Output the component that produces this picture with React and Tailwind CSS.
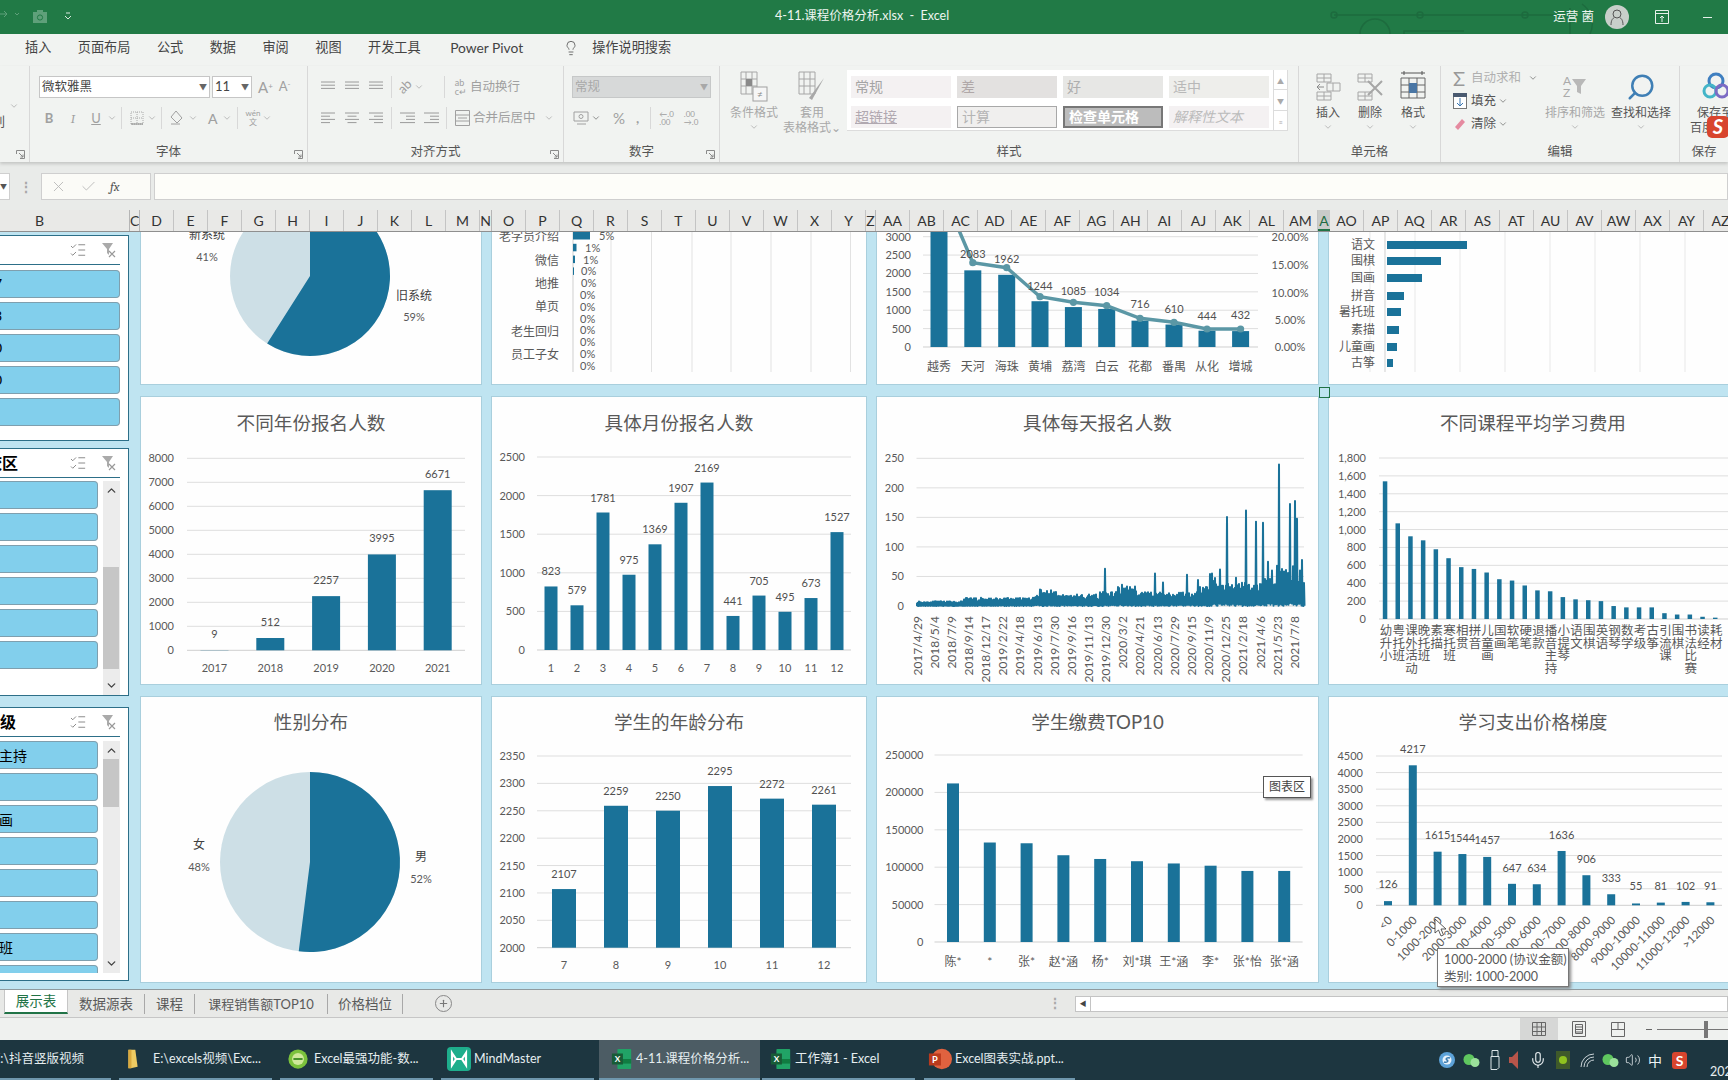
import React from "react";
import { ChevronDown, ChevronUp, X, Check, Lightbulb, Search, Mic, Volume2, ListChecks, Plus } from "lucide-react";

const BLUE = "#1a7299";
const LIGHT = "#cddfe6";
const COL = [141, 492, 877, 1329];
const COLW = [340, 374, 441, 408];
const ROW = [232, 397, 697];
const ROWH = [152, 287, 285];

const polar = (cx, cy, r, frac) => {
  const a = frac * 2 * Math.PI;
  return [cx + r * Math.sin(a), cy - r * Math.cos(a)];
};

// pie starting at 12 o'clock, dark slice clockwise
const Pie = ({ cx, cy, r, share }) => {
  const [x, y] = polar(cx, cy, r, share);
  return (
    <g>
      <circle cx={cx} cy={cy} r={r} fill={LIGHT} />
      <path d={`M${cx} ${cy}L${cx} ${cy - r}A${r} ${r} 0 ${share > 0.5 ? 1 : 0} 1 ${x} ${y}Z`} fill={BLUE} />
    </g>
  );
};

const Card = ({ col, row, title, children }) => {
  const top = !title ? 0 : row === 1 ? 55 : 52;
  const h = ROWH[row] - top;
  return (
    <div className="bg-[#fefefe] shadow-[0_0_0_1px_#a9cfdd] flex flex-col">
      {title && (
        <div className={`shrink-0 flex items-center justify-center text-[18.6px] text-[#595959] ${row === 1 ? "h-[55px]" : "h-[52px]"}`}>{title}</div>
      )}
      <svg className="block shrink-0 overflow-visible" width={COLW[col]} height={h} viewBox={`${COL[col]} ${ROW[row] + top} ${COLW[col]} ${h}`}>
        {children}
      </svg>
    </div>
  );
};

// value axis and gridlines shared by the column charts
const Axis = ({ x1, x2, top, base, labels, lx, fs = 11 }) => {
  const step = (base - top) / (labels.length - 1);
  return (
    <g>
      {labels.map((t, i) => {
        const y = top + step * i;
        return (
          <g key={t}>
            <line x1={x1} x2={x2} y1={y} y2={y} stroke={i === labels.length - 1 ? "#cfcfcf" : "#dedede"} />
            <text x={lx} y={y + 4} textAnchor="end" fontSize={fs} fill="#595959">{t}</text>
          </g>
        );
      })}
    </g>
  );
};

const Columns = ({ data, cx0, dx, w, base, scale, min = 0, fill = BLUE }) =>
  data.map((v, i) => (
    <rect key={i} x={cx0 + dx * i - w / 2} y={base - (v - min) * scale} width={w} height={(v - min) * scale} fill={fill} />
  ));

const Vals = ({ data, cx0, dx, base, scale, min = 0, gap = 12, fs = 11 }) =>
  data.map((v, i) => (
    <text key={i} x={cx0 + dx * i} y={base - (v - min) * scale - gap} textAnchor="middle" fontSize={fs} fill="#505050">{v}</text>
  ));

const Cats = ({ data, cx0, dx, y, fs = 11 }) =>
  data.map((c, i) => (
    <text key={i} x={cx0 + dx * i} y={y} textAnchor="middle" fontSize={fs} fill="#595959">{c}</text>
  ));

/* --------- daily sign-ups: noisy band with the big spikes of the picture --------- */
const SPIKES = [[430, 63], [460, 36], [520, 55], [535, 40], [580, 53], [600, 44], [625, 55], [640, 62], [653, 151], [668, 48], [687, 162], [705, 143], [718, 141], [728, 75], [735, 60], [748, 240], [768, 173], [777, 178], [780, 148], [789, 78], [785, 60]];
const dailyPath = () => {
  let seed = 11;
  const rnd = () => {
    seed = (seed * 16807) % 2147483647;
    return seed / 2147483647;
  };
  const env = (z) => (z < 170 ? 8 : z < 300 ? 14 : z < 420 ? 20 : z < 620 ? 24 : z < 720 ? 40 : 52);
  const spikeAt = {};
  SPIKES.forEach(([z, v]) => {
    spikeAt[Math.round(870 + z / 1.827)] = v;
  });
  let d = "M917 606";
  for (let x = 917; x <= 1304; x++) {
    const z = (x - 870) * 1.827;
    const bump = z > 300 && Math.sin(z / 23) > 0.75 ? 1.4 : 1;
    const hi = spikeAt[x] ?? env(z) * bump * (0.55 + 0.45 * rnd());
    const lo = env(z) * 0.12 * rnd();
    d += `L${x} ${606 - hi * 0.59}L${x + 0.5} ${606 - lo * 0.59}`;
  }
  return d;
};
const DAILY_D = dailyPath();
const DAILY_LABELS = ["2017/4/29", "2018/5/4", "2018/7/9", "2018/9/14", "2018/12/17", "2019/2/22", "2019/4/18", "2019/6/13", "2019/7/30", "2019/9/16", "2019/11/13", "2019/12/30", "2020/3/2", "2020/4/21", "2020/6/13", "2020/7/29", "2020/9/15", "2020/11/9", "2020/12/25", "2021/2/18", "2021/4/6", "2021/5/23", "2021/7/8"];

const COURSE = [[1540, "幼升小"], [1070, "粤托班"], [925, "课外活动"], [880, "晚托班"], [780, "素描"], [680, "寒托班"], [580, "相贯"], [560, "拼音"], [520, "儿童画"], [445, "国画"], [430, "软笔"], [375, "硬笔"], [320, "退款"], [310, "播音主持"], [245, "小提琴"], [220, "语文"], [210, "围棋"], [200, "英语"], [145, "钢琴"], [130, "数学"], [130, "考级"], [130, "古筝"], [65, "引流课"], [50, "围棋"], [50, "书法比赛"], [25, "读经"], [15, "耗材"]];

const PRICE = [[126, 884, "<0"], [4217, 749, "0-1000"], [1615, 835, "1000-2000"], [1544, 838, "2000-3000"], [1457, 840, "3000-4000"], [647, 868, "4000-5000"], [634, 868, "5000-6000"], [1636, 835, "6000-7000"], [906, 859, "7000-8000"], [333, 878, "8000-9000"], [55, 886, "9000-10000"], [81, 886, "10000-11000"], [102, 886, "11000-12000"], [91, 886, ">12000"]];

const AREA = [[939, null, "越秀", 0, 0], [972.8, 2083, "天河", 254, 262.7], [1006.7, 1962, "海珠", 259, 267.7], [1040, 1244, "黄埔", 285.7, 296.7], [1073.4, 1085, "荔湾", 290.7, 302.3], [1106.7, 1034, "白云", 292, 305.7], [1140, 716, "花都", 304, 318.3], [1174, 610, "番禺", 309, 322.3], [1207, 444, "从化", 315.7, 329], [1240.6, 432, "增城", 315, 329]];

const SOURCE = [["老字员介绍", 237], ["微信", 261], ["地推", 284], ["单页", 307], ["老生回归", 332], ["员工子女", 355]];
const PCT = [["5%", 17, 599], ["1%", 3.5, 585], ["1%", 2, 583], ["0%", 1, 581], ["0%", 0, 581], ["0%", 0, 580], ["0%", 0, 580], ["0%", 0, 580], ["0%", 0, 580], ["0%", 0, 580], ["0%", 0, 580], ["0%", 0, 580]];

/* --------- chart cards --------- */
const Charts = () => (
  <div className="grid grid-cols-[340px_374px_441px_408px] grid-rows-[152px_287px_285px] gap-x-[11px] gap-y-[13px]">
    <Card col={0} row={0}>
      <Pie cx={310} cy={276} r={80} share={0.59} />
      <text x={207} y={239} textAnchor="middle" fontSize={12} fill="#404040">新系统</text>
      <text x={207} y={261} textAnchor="middle" fontSize={11} fill="#595959">41%</text>
      <text x={414} y={300} textAnchor="middle" fontSize={12} fill="#404040">旧系统</text>
      <text x={414} y={321} textAnchor="middle" fontSize={11} fill="#595959">59%</text>
    </Card>

    <Card col={1} row={0}>
      {[611, 651.5, 692, 731, 771, 811, 850.5].map((x) => (
        <line key={x} x1={x} x2={x} y1={232} y2={372} stroke="#e2e2e2" />
      ))}
      <line x1={573} x2={573} y1={232} y2={372} stroke="#cfcfcf" />
      {SOURCE.map(([t, y]) => (
        <text key={t} x={559} y={y + 4} textAnchor="end" fontSize={12} fill="#595959">{t}</text>
      ))}
      {PCT.map(([t, w, x], i) => (
        <g key={i}>
          {w > 0 && <rect x={573} y={232 + 11.8 * i} width={w} height={7.5} fill={BLUE} />}
          <text x={x} y={240 + 11.8 * i} fontSize={11} fill="#595959">{t}</text>
        </g>
      ))}
    </Card>

    <Card col={2} row={0}>
      <Axis x1={923} x2={1258} top={236.7} base={347} labels={["3000", "2500", "2000", "1500", "1000", "500", "0"]} lx={911} />
      {AREA.map(([x, v], i) => (
        <rect key={i} x={x - 8.5} y={v ? 347 - v * 0.0368 : 228} width={17} height={v ? v * 0.0368 : 119} fill={BLUE} />
      ))}
      <polyline points={`958,228 ${AREA.slice(1).map((a) => `${a[0]},${a[4]}`).join(" ")}`} fill="none" stroke="#5b97a5" strokeWidth={3.5} />
      {AREA.slice(1).map((a) => (
        <g key={a[2]}>
          <circle cx={a[0]} cy={a[4]} r={3.6} fill="#5b97a5" />
          <text x={a[0]} y={a[3] + 4} textAnchor="middle" fontSize={11} fill="#505050">{a[1]}</text>
        </g>
      ))}
      {AREA.map((a) => (
        <text key={a[2]} x={a[0]} y={371} textAnchor="middle" fontSize={12} fill="#595959">{a[2]}</text>
      ))}
      {[["20.00%", 237], ["15.00%", 265], ["10.00%", 292.5], ["5.00%", 320], ["0.00%", 347]].map(([t, y]) => (
        <text key={t} x={1290} y={y + 4} textAnchor="middle" fontSize={11} fill="#595959">{t}</text>
      ))}
    </Card>

    <Card col={3} row={0}>
      {[1370, 1415, 1460, 1505, 1550, 1595, 1640, 1685].map((x) => (
        <line key={x} x1={x} x2={x} y1={232} y2={372} stroke="#e8e8e8" />
      ))}
      <line x1={1385} x2={1385} y1={232} y2={372} stroke="#cfcfcf" />
      {[["语文", 245, 80], ["围棋", 261, 54], ["国画", 278, 35], ["拼音", 296, 17], ["暑托班", 312, 14], ["素描", 330, 12], ["儿童画", 347, 10], ["古筝", 363, 6]].map(([t, y, w]) => (
        <g key={y}>
          <text x={1375} y={y + 4} textAnchor="end" fontSize={12} fill="#595959">{t}</text>
          <rect x={1387} y={y - 4} width={w} height={8} fill={BLUE} />
        </g>
      ))}
    </Card>

    <Card col={0} row={1} title="不同年份报名人数">
      <Axis x1={187} x2={465} top={458.3} base={650.3} labels={["8000", "7000", "6000", "5000", "4000", "3000", "2000", "1000", "0"]} lx={174} />
      <Columns data={[9, 512, 2257, 3995, 6671]} cx0={214.5} dx={55.8} w={28} base={650.3} scale={0.024} />
      <Vals data={[9, 512, 2257, 3995, 6671]} cx0={214.5} dx={55.8} base={650.3} scale={0.024} gap={12} />
      <Cats data={[2017, 2018, 2019, 2020, 2021]} cx0={214.5} dx={55.8} y={672} />
    </Card>

    <Card col={1} row={1} title="具体月份报名人数">
      <Axis x1={537} x2={851} top={457} base={650} labels={["2500", "2000", "1500", "1000", "500", "0"]} lx={525} />
      <Columns data={[823, 579, 1781, 975, 1369, 1907, 2169, 441, 705, 495, 673, 1527]} cx0={551} dx={26} w={13} base={650} scale={0.0772} />
      <Vals data={[823, 579, 1781, 975, 1369, 1907, 2169, 441, 705, 495, 673, 1527]} cx0={551} dx={26} base={650} scale={0.0772} gap={11} />
      <Cats data={[1, 2, 3, 4, 5, 6, 7, 8, 9, 10, 11, 12]} cx0={551} dx={26} y={672} />
    </Card>

    <Card col={2} row={1} title="具体每天报名人数">
      <Axis x1={916.5} x2={1304} top={458.3} base={606} labels={["250", "200", "150", "100", "50", "0"]} lx={904} />
      <path d={DAILY_D} fill="none" stroke={BLUE} strokeWidth={2} strokeLinejoin="round" />
      {DAILY_LABELS.map((t, i) => (
        <text key={t} transform={`translate(${921.5 + i * 17.15} 616) rotate(-90)`} textAnchor="end" fontSize={12} fill="#595959">{t}</text>
      ))}
    </Card>

    <Card col={3} row={1} title="不同课程平均学习费用">
      <Axis x1={1379} x2={1728} top={458} base={619} labels={["1,800", "1,600", "1,400", "1,200", "1,000", "800", "600", "400", "200", "0"]} lx={1366} />
      {COURSE.map(([v, t], i) => (
        <g key={i}>
          <rect x={1382.8 + 12.7 * i} y={619 - v * 0.0894} width={4.5} height={v * 0.0894} fill={BLUE} />
          <text x={1385 + 12.7 * i} y={624} fontSize={12.5} fill="#595959" className="[writing-mode:vertical-rl]">{t}</text>
        </g>
      ))}
    </Card>

    <Card col={0} row={2} title="性别分布">
      <Pie cx={310} cy={862} r={90} share={0.52} />
      <text x={199} y={849} textAnchor="middle" fontSize={12} fill="#404040">女</text>
      <text x={199} y={871} textAnchor="middle" fontSize={11} fill="#595959">48%</text>
      <text x={421} y={861} textAnchor="middle" fontSize={12} fill="#404040">男</text>
      <text x={421} y={883} textAnchor="middle" fontSize={11} fill="#595959">52%</text>
    </Card>

    <Card col={1} row={2} title="学生的年龄分布">
      <Axis x1={537} x2={851} top={756} base={947.7} labels={["2350", "2300", "2250", "2200", "2150", "2100", "2050", "2000"]} lx={525} />
      <Columns data={[2107, 2259, 2250, 2295, 2272, 2261]} cx0={564} dx={52} w={24} base={947.7} scale={0.548} min={2000} />
      <Vals data={[2107, 2259, 2250, 2295, 2272, 2261]} cx0={564} dx={52} base={947.7} scale={0.548} min={2000} gap={11} />
      <Cats data={[7, 8, 9, 10, 11, 12]} cx0={564} dx={52} y={969} />
    </Card>

    <Card col={2} row={2} title="学生缴费TOP10">
      <Axis x1={934.5} x2={1302.6} top={755} base={942} labels={["250000", "200000", "150000", "100000", "50000", "0"]} lx={923.5} />
      <Columns data={[212000, 133000, 132000, 116000, 111000, 108000, 105000, 102000, 95000, 95000]} cx0={953} dx={36.8} w={12} base={942} scale={0.000748} />
      <Cats data={["陈*", "*", "张*", "赵*涵", "杨*", "刘*琪", "王*涵", "李*", "张*怡", "张*涵"]} cx0={953} dx={36.8} y={966} fs={12} />
    </Card>

    <Card col={3} row={2} title="学习支出价格梯度">
      <Axis x1={1376} x2={1722} top={756} base={905.3} labels={["4500", "4000", "3500", "3000", "2500", "2000", "1500", "1000", "500", "0"]} lx={1363} />
      {PRICE.map(([v, ly, t], i) => (
        <g key={t}>
          <rect x={1384 + 24.8 * i} y={905.3 - v * 0.0332} width={8} height={v * 0.0332} fill={BLUE} />
          <text x={1388 + 24.8 * i} y={ly + 4} textAnchor="middle" fontSize={11} fill="#505050">{v}</text>
          <text transform={`translate(${1393 + 24.8 * i} 921) rotate(-45)`} textAnchor="end" fontSize={11.5} fill="#595959">{t}</text>
        </g>
      ))}
    </Card>
  </div>
);

/* --------- slicers on the left, cut off by the sheet's edge --------- */
const SlicerHead = ({ label, shift = "" }) => (
  <div className="flex items-center h-[29px] mr-[8px] border-b border-[#2d6f88] shrink-0">
    <span className={`text-[16px] font-bold text-black whitespace-nowrap ${shift}`}>{label}</span>
    <div className="ml-auto flex items-center gap-[14px] pr-[3px]">
      <ListChecks size={18} strokeWidth={1} className="text-[#666]" />
      <svg width="16" height="18" viewBox="0 0 16 18">
        <path d="M1 2h11L8 8v6L6 12V8z" fill="#aaa" />
        <path d="M8 10l6 6M14 10l-6 6" stroke="#999" strokeWidth="1.2" />
      </svg>
    </div>
  </div>
);

const SlicerBtn = ({ text, shift = "-ml-[6px]" }) => (
  <div className="h-[28px] shrink-0 rounded-r-[4px] bg-[#82cfec] border border-l-0 border-[#7f9fae] flex items-center overflow-hidden text-[14px] text-black">
    <span className={`whitespace-nowrap ${shift}`}>{text}</span>
  </div>
);

const SlicerBar = ({ thumbTop, thumbH }) => (
  <div className="relative w-[17px] shrink-0 bg-[#ececec] flex flex-col justify-between items-center py-[3px]">
    <div className="absolute left-0 w-[16px] bg-[#c6c6c6]" style={{ top: thumbTop, height: thumbH }} />
    <ChevronUp size={13} strokeWidth={2.5} className="relative text-[#444]" />
    <ChevronDown size={13} strokeWidth={2.5} className="relative text-[#444]" />
  </div>
);

const Slicers = () => (
  <div className="w-[129px] shrink-0 flex flex-col pt-[3px] pb-[8px]">
    <div className="h-[206px] bg-white border border-l-0 border-[#2d6f88] flex flex-col overflow-hidden">
      <SlicerHead label="" />
      <div className="flex flex-col gap-[4px] pt-[5px] mr-[8px]">
        {["7", "3", "0", "0", ""].map((t, i) => (
          <SlicerBtn key={i} text={t} />
        ))}
      </div>
    </div>
    <div className="h-[249px] mt-[7px] bg-white border border-l-0 border-[#2d6f88] flex flex-col overflow-hidden">
      <SlicerHead label="校区" shift="-ml-[14px]" />
      <div className="flex gap-[5px] pt-[3px] mr-[8px] h-[217px]">
        <div className="flex-1 flex flex-col gap-[4px]">
          {[0, 1, 2, 3, 4, 5].map((i) => (
            <SlicerBtn key={i} text="" />
          ))}
        </div>
        <SlicerBar thumbTop={86} thumbH={102} />
      </div>
    </div>
    <div className="h-[274px] mt-[11px] bg-white border border-l-0 border-[#2d6f88] flex flex-col overflow-hidden">
      <SlicerHead label="年级" shift="-ml-[16px]" />
      <div className="flex gap-[5px] pt-[4px] mr-[8px] h-[236px]">
        <div className="flex-1 flex flex-col gap-[4px] overflow-hidden">
          {["主持", "", "画", "", "", "", "班", ""].map((t, i) => (
            <SlicerBtn key={i} text={t} shift="-ml-[1px]" />
          ))}
        </div>
        <SlicerBar thumbTop={18} thumbH={48} />
      </div>
    </div>
  </div>
);

/* --------- chrome --------- */
const NAMES = "D E F G H I J K L M N O P Q R S T U V W X Y Z AA AB AC AD AE AF AG AH AI AJ AK AL AM A AO AP AQ AR AS AT AU AV AW AX AY AZ".split(" ");
const ColHead = () => (
  <div className="flex h-[22px] bg-[#e9e9e7] border-b border-[#8f8f8f] overflow-hidden text-[14px] text-[#333] leading-[21px]">
    <div className="w-[130px] shrink-0 pr-[50px] text-center border-r border-[#b5b5b5]">B</div>
    <div className="w-[10px] shrink-0 text-center border-r border-[#b5b5b5] overflow-hidden">C</div>
    {NAMES.map((n, i) => {
      if (n === "N") return <div key={i} className="w-[12px] shrink-0 text-center border-r border-[#b5b5b5] overflow-hidden">N</div>;
      if (n === "Z") return <div key={i} className="w-[10px] shrink-0 text-center border-r border-[#b5b5b5] overflow-hidden">Z</div>;
      if (n === "A") return <div key={i} className="w-[12px] shrink-0 text-center bg-[#c9cbc9] text-[#1f6b42] border-b-2 border-[#217346] overflow-hidden">A</div>;
      return <div key={i} className="w-[34px] shrink-0 text-center border-r border-[#c4c4c4]">{n}</div>;
    })}
  </div>
);

const Lines = ({ widths, x = "l", className = "" }) => (
  <svg width="16" height="14" viewBox="0 0 16 14" className={`shrink-0 ${className}`}>
    {widths.map((w, i) => {
      const x1 = x === "l" ? 1 : x === "c" ? 8 - w / 2 : 15 - w;
      return <line key={i} x1={x1} x2={x1 + w} y1={2 + i * 3.2} y2={2 + i * 3.2} stroke="#9a9a9a" />;
    })}
  </svg>
);

const Chev = ({ className = "" }) => <ChevronDown size={10} strokeWidth={1.5} className={`text-[#9a9a9a] shrink-0 ${className}`} />;
const Sep = () => <span className="block w-px h-[22px] bg-[#d8d8d8] shrink-0" />;

const GroupLabel = ({ text }) => (
  <div className="mt-auto h-[20px] flex items-center justify-center text-[12.5px] text-[#555]">{text}</div>
);

const Launcher = () => (
  <svg width="9" height="9" viewBox="0 0 9 9" className="absolute right-[4px] bottom-[3px]">
    <path d="M.5 4V.5H8.5V8.5H4M3 3l4 4M7 4.5V7H4.5" fill="none" stroke="#8a8a8a" />
  </svg>
);

const StyleCell = ({ text, className }) => (
  <div className={`w-[100px] h-[22px] flex items-center px-[4px] text-[14px] whitespace-nowrap ${className}`}>{text}</div>
);

const GridIcon = ({ children }) => (
  <svg width="30" height="34" viewBox="0 0 30 34">
    <g fill="none" stroke="#a6a6a6">
      <path d="M2 2h16v22H2zM2 9h16M2 16h16M7 2v22M13 2v22" />
    </g>
    {children}
  </svg>
);

const BigTool = ({ icon, label, w, caret = true, dark }) => (
  <div className={`flex flex-col items-center shrink-0 ${w}`}>
    <div className="h-[36px] flex items-center justify-center">{icon}</div>
    <div className={`text-[12px] leading-[15px] text-center whitespace-nowrap ${dark ? "text-[#555]" : "text-[#a8a8a8]"}`}>{label}</div>
    {caret && <Chev className="mt-[2px]" />}
  </div>
);

const Ribbon = () => (
  <div className="flex h-[96px] bg-[#f1f3f1] shadow-[0_2px_3px_#c4c6c4] relative overflow-hidden text-[#a0a0a0]">
    <div className="w-[30px] shrink-0 relative border-r border-[#d8d8d8] flex flex-col">
      <Chev className="mt-[35px] ml-[9px]" />
      <div className="text-[13px] text-[#555] -ml-[8px] mt-[1px]">刷</div>
      <Launcher />
    </div>

    <div className="w-[278px] shrink-0 relative border-r border-[#d8d8d8] flex flex-col">
      <div className="flex items-center pl-[9px] pt-[10px]">
        <div className="w-[171px] h-[22px] bg-white border border-[#c6c6c6] flex items-center px-[2px] text-[12.5px] text-[#444]">
          微软雅黑<span className="ml-auto text-[8px] text-[#666]">▼</span>
        </div>
        <div className="ml-[2px] w-[40px] h-[22px] bg-white border border-[#c6c6c6] flex items-center px-[2px] text-[13px] text-[#444]">
          11<span className="ml-auto text-[8px] text-[#666]">▼</span>
        </div>
        <span className="ml-[6px] text-[15px]">A<sup className="text-[8px]">+</sup></span>
        <span className="ml-[6px] text-[13px]">A<sup className="text-[8px]">-</sup></span>
      </div>
      <div className="flex items-center pl-[7px] pt-[9px] h-[31px] text-[#a0a0a0]">
        <span className="w-[24px] text-center text-[13px] font-bold">B</span>
        <span className="w-[24px] text-center text-[13px] italic font-serif">I</span>
        <span className="w-[22px] text-center text-[13px] underline">U</span>
        <Chev className="mr-[4px]" />
        <Sep />
        <svg width="16" height="16" viewBox="0 0 16 16" className="ml-[7px]"><path d="M2 2h12v12H2zM2 8h12M8 2v12" fill="none" stroke="#aaa" strokeDasharray="1 1" /><path d="M2 14h12" stroke="#888" /></svg>
        <Chev className="ml-[2px]" />
        <span className="ml-[4px]"><Sep /></span>
        <svg width="18" height="18" viewBox="0 0 18 18" className="ml-[6px]"><path d="M8 2l6 7-5 5-6-6zM3 15h9" fill="none" stroke="#a0a0a0" /></svg>
        <Chev className="ml-[2px]" />
        <span className="ml-[10px] text-[14px] font-medium">A</span>
        <Chev className="ml-[4px]" />
        <span className="ml-[5px]"><Sep /></span>
        <span className="ml-[8px] text-[8px] leading-[9px] text-center">wén<br />文</span>
        <Chev className="ml-[2px]" />
      </div>
      <GroupLabel text="字体" />
      <Launcher />
    </div>

    <div className="w-[256px] shrink-0 relative border-r border-[#d8d8d8] flex flex-col whitespace-nowrap">
      <div className="flex items-center pl-[12px] pt-[10px] h-[32px]">
        <Lines widths={[14, 14, 14]} />
        <Lines widths={[14, 14, 14]} className="ml-[8px]" />
        <Lines widths={[14, 14, 14]} className="ml-[8px]" />
        <span className="ml-[7px]"><Sep /></span>
        <span className="ml-[6px] text-[13px] -rotate-45">ab</span>
        <Chev className="ml-[2px]" />
        <span className="ml-[20px]"><Sep /></span>
        <span className="ml-[10px] text-[9px] leading-[9px]">ab<br />c↵</span>
        <span className="ml-[3px] text-[12.5px]">自动换行</span>
      </div>
      <div className="flex items-center pl-[12px] pt-[9px] h-[31px]">
        <Lines widths={[14, 9, 14, 9]} />
        <Lines widths={[14, 9, 14, 9]} x="c" className="ml-[8px]" />
        <Lines widths={[14, 9, 14, 9]} x="r" className="ml-[8px]" />
        <span className="ml-[7px]"><Sep /></span>
        <Lines widths={[15, 9, 9, 15]} x="r" className="ml-[8px]" />
        <Lines widths={[15, 9, 9, 15]} x="r" className="ml-[8px]" />
        <span className="ml-[6px]"><Sep /></span>
        <svg width="15" height="16" viewBox="0 0 15 16" className="ml-[8px] shrink-0"><path d="M.5.5h14v15H.5zM.5 5h14M.5 11h14M3 8h9" fill="none" stroke="#a0a0a0" /></svg>
        <span className="ml-[3px] text-[12.5px]">合并后居中</span>
        <Chev className="ml-[8px]" />
      </div>
      <GroupLabel text="对齐方式" />
      <Launcher />
    </div>

    <div className="w-[156px] shrink-0 relative border-r border-[#d8d8d8] flex flex-col">
      <div className="pl-[8px] pt-[10px]">
        <div className="w-[139px] h-[22px] bg-[#d7d9d9] border border-[#c6c8c8] flex items-center px-[2px] text-[12.5px] text-[#a8a8a8]">
          常规<span className="ml-auto text-[8px]">▼</span>
        </div>
      </div>
      <div className="flex items-center pl-[9px] pt-[9px] h-[31px]">
        <svg width="16" height="16" viewBox="0 0 16 16"><path d="M1 2h14v9H1zM4 14h9" fill="none" stroke="#a0a0a0" /><circle cx="8" cy="6.5" r="2" fill="none" stroke="#a0a0a0" /></svg>
        <Chev className="ml-[2px] text-[#555]" />
        <span className="ml-[12px] text-[15px]">%</span>
        <span className="ml-[11px] text-[14px] font-bold">,</span>
        <span className="ml-[11px]"><Sep /></span>
        <span className="ml-[8px] text-[8px] leading-[8px]">←.0<br />.00</span>
        <span className="ml-[10px] text-[8px] leading-[8px]">.00<br />→.0</span>
      </div>
      <GroupLabel text="数字" />
      <Launcher />
    </div>

    <div className="w-[579px] shrink-0 border-r border-[#d8d8d8] flex flex-col">
      <div className="flex pt-[3px]">
        <BigTool
          w="w-[58px] ml-[5px]"
          label="条件格式"
          icon={<GridIcon><rect x="7" y="9" width="6" height="7" fill="#8a8a8a" /><rect x="14" y="17" width="14" height="14" fill="#f6f6f6" stroke="#a0a0a0" /><text x="21" y="28" textAnchor="middle" fontSize="10" fill="#888">≠</text></GridIcon>}
        />
        <BigTool
          w="w-[58px]"
          label={<>套用<br />表格格式⌄</>}
          caret={false}
          icon={<GridIcon><path d="M27 8L15 30l-3-2z" fill="#a8a8a8" /></GridIcon>}
        />
        <div className="ml-[6px] mt-[1px] h-[61px] w-[441px] bg-white border-r border-b border-[#dcdcdc] flex">
          <div className="flex flex-wrap gap-x-[6px] gap-y-[6px] pl-[4px] pt-[6px] w-[427px]">
            <StyleCell text="常规" className="bg-[#f4f1f2] text-[#a4a4a4]" />
            <StyleCell text="差" className="bg-[#e3e1e0] text-[#b0a8a8]" />
            <StyleCell text="好" className="bg-[#e7e7e5] text-[#aeaeae]" />
            <StyleCell text="适中" className="bg-[#eeeeeb] text-[#b8b8b8]" />
            <StyleCell text="超链接" className="bg-[#f4f1f2] text-[#b0a8b0] underline" />
            <StyleCell text="计算" className="bg-[#f0efee] border border-[#a8a8a8] text-[#b4b4b4]" />
            <StyleCell text="检查单元格" className="bg-[#bcbcbc] border-2 border-[#777] text-white font-bold" />
            <StyleCell text="解释性文本" className="bg-[#f4f1f2] text-[#bbb] italic" />
          </div>
          <div className="w-[14px] border-l border-[#dcdcdc] flex flex-col text-[7px] text-[#aaa] text-center divide-y divide-[#dcdcdc]">
            <span className="flex-1 pt-[6px]">▲</span>
            <span className="flex-1 pt-[6px]">▼</span>
            <span className="flex-1 pt-[6px]">≡</span>
          </div>
        </div>
      </div>
      <GroupLabel text="样式" />
    </div>

    <div className="w-[142px] shrink-0 border-r border-[#d8d8d8] flex flex-col">
      <div className="flex pl-[8px] pt-[3px]">
        <BigTool w="w-[42px]" dark label="插入" icon={<svg width="26" height="30" viewBox="0 0 26 30"><path d="M2 2h14v8H2zM2 20h14v8H2zM9 2v8M9 20v8M2 6h14M2 24h14M12 11h13v8H12zM18 11v8" fill="none" stroke="#a6a6a6" /><path d="M9 15H2M5 12l-3 3 3 3" fill="none" stroke="#8a8a8a" /></svg>} />
        <BigTool w="w-[42px]" dark label="删除" icon={<svg width="28" height="30" viewBox="0 0 28 30"><path d="M2 2h14v8H2zM2 20h14v8H2zM9 2v8M9 20v8M2 6h14M2 24h14" fill="none" stroke="#a6a6a6" /><path d="M12 9l14 14M26 9L12 23" stroke="#a6a6a6" strokeWidth="2" /></svg>} />
        <BigTool w="w-[44px]" dark label="格式" icon={<svg width="28" height="34" viewBox="0 0 28 34"><path d="M2 3h24M5 1v4M23 1v4" stroke="#555" fill="none" /><path d="M2 8h24v20H2zM2 15h24M2 22h24M10 8v20M18 8v20" fill="none" stroke="#666" /><rect x="10" y="13" width="8" height="10" fill="#4a76a4" /></svg>} />
      </div>
      <GroupLabel text="单元格" />
    </div>

    <div className="w-[239px] shrink-0 border-r border-[#d8d8d8] flex flex-col">
      <div className="flex pl-[12px] pt-[1px]">
        <div className="w-[92px] flex flex-col gap-[1px] text-[12.5px]">
          <div className="flex items-center h-[22px] text-[#b0b0b0]"><span className="text-[20px] leading-none w-[18px] text-[#999]">Σ</span>自动求和<Chev className="ml-[7px] text-[#555]" /></div>
          <div className="flex items-center h-[22px] text-[#555]"><span className="w-[18px]"><svg width="14" height="16" viewBox="0 0 14 16"><rect x=".5" y=".5" width="13" height="15" fill="#fff" stroke="#777" /><path d="M0 0h14v4H0z" fill="#4a5a70" /><path d="M7 5v8M4 10l3 3 3-3" fill="none" stroke="#3a76b0" /></svg></span>填充<Chev className="ml-[2px] text-[#555]" /></div>
          <div className="flex items-center h-[22px] text-[#555]"><span className="w-[18px]"><svg width="14" height="14" viewBox="0 0 14 14"><path d="M2 10l7-8 3 3-7 8z" fill="#e58aa0" /></svg></span>清除<Chev className="ml-[2px] text-[#555]" /></div>
        </div>
        <BigTool w="w-[66px] -ml-[3px] mt-[2px]" label="排序和筛选" icon={<span className="flex items-center text-[12px] leading-[12px] text-[#aaa]"><span>A<br />Z</span><svg width="16" height="20" viewBox="0 0 16 20"><path d="M1 2h14L10 9v8l-4-2V9z" fill="#b8b8b8" /></svg></span>} />
        <BigTool w="w-[66px] mt-[2px]" dark label="查找和选择" icon={<Search size={30} strokeWidth={2} className="text-[#3f7fb5] -scale-x-100" />} />
      </div>
      <GroupLabel text="编辑" />
    </div>

    <div className="flex-1 relative flex flex-col overflow-hidden">
      <div className="flex flex-col pl-[22px] pt-[3px]">
        <svg width="28" height="36" viewBox="0 0 28 36"><circle cx="14" cy="12" r="7" fill="none" stroke="#3f7fc0" strokeWidth="3" /><circle cx="8" cy="22" r="6" fill="none" stroke="#44b5c8" strokeWidth="3" /><circle cx="20" cy="22" r="6" fill="none" stroke="#7c6bc4" strokeWidth="3" /></svg>
        <div className="text-[12px] text-[#555] leading-[15px] whitespace-nowrap -ml-[5px]">保存至</div>
        <div className="text-[12px] text-[#555] leading-[15px] whitespace-nowrap -ml-[12px]">百度</div>
      </div>
      <span className="absolute left-[27px] top-[50px] w-[22px] h-[22px] rounded-[5px] bg-[#d8452e] text-white font-bold italic text-[20px] leading-[21px] text-center">S</span>
      <GroupLabel text="保存" />
    </div>
  </div>
);

const TitleBar = () => (
  <div className="relative h-[34px] bg-[#217a46] flex items-center text-white">
    <svg className="absolute left-[1320px] top-0" width="300" height="34" viewBox="0 0 300 34">
      <g fill="none" stroke="#1d6b3e" strokeWidth="1.5">
        <path d="M14 15h220M40 34a15 15 0 0 1 30 0M84 34v-3h60M250 34V8M270 34a24 24 0 0 0-8-30" />
        <circle cx="14" cy="15" r="3" />
        <circle cx="100" cy="15" r="3" />
        <circle cx="205" cy="15" r="3" />
      </g>
    </svg>
    <svg width="75" height="34" viewBox="0 0 75 34" className="shrink-0">
      <path d="M0 14h6M4 11l3 3-3 3" fill="none" stroke="#5fa07a" />
      <path d="M15 13l2 2 2-2" fill="none" stroke="#5fa07a" />
      <rect x="33" y="12" width="14" height="11" fill="#5fa07a" />
      <rect x="37" y="10" width="6" height="3" fill="#5fa07a" />
      <circle cx="40" cy="17.5" r="2.6" fill="none" stroke="#217a46" />
      <path d="M66 13h4M65 16l3 3 3-3" fill="none" stroke="#d8e8de" />
    </svg>
    <div className="absolute left-[775px] top-0 h-[32px] flex items-center text-[12.5px] whitespace-pre text-[#eef5f0]">4-11.课程价格分析.xlsx  -  Excel</div>
    <div className="ml-auto flex items-center relative">
      <span className="text-[12.5px] text-[#eef5f0] whitespace-pre">运营 菌</span>
      <span className="ml-[11px] w-[24px] h-[24px] rounded-full bg-[#c8cfca] flex items-center justify-center">
        <svg width="14" height="18" viewBox="0 0 14 18"><circle cx="7" cy="6" r="4" fill="none" stroke="#555" /><path d="M1 17c0-5 2-7 3-7M13 17c0-5-2-7-3-7" fill="none" stroke="#555" /></svg>
      </span>
      <svg width="14" height="14" viewBox="0 0 14 14" className="ml-[26px]"><path d="M.5.5h13v13H.5zM.5 3.5h13M7 12V6M5 8l2-2 2 2" fill="none" stroke="#e6f0ea" /></svg>
      <span className="ml-[34px] mr-[16px] w-[9px] h-px bg-[#e6f0ea]" />
    </div>
  </div>
);

const MenuRow = () => (
  <div className="h-[32px] bg-[#f1f3f1] flex items-center pl-[25px] pb-[4px] gap-[26.5px] text-[13.15px] text-[#444] whitespace-nowrap">
    <span>插入</span>
    <span>页面布局</span>
    <span>公式</span>
    <span>数据</span>
    <span>审阅</span>
    <span>视图</span>
    <span>开发工具</span>
    <span className="ml-[3px] text-[13.8px]">Power Pivot</span>
    <Lightbulb size={16} strokeWidth={1.25} className="ml-[13px] -mr-[13px] text-[#555]" />
    <span>操作说明搜索</span>
  </div>
);

const FormulaBar = () => (
  <div className="h-[48px] bg-[#e9ebe9] flex items-start pt-[11px] pb-[10px]">
    <div className="w-[10px] h-[27px] bg-white border-y border-r border-[#cfcfcf] flex items-center text-[7px] text-[#555]">▼</div>
    <div className="w-[31px] h-[27px] flex items-center justify-center text-[#a8a8a8] text-[14px] font-bold">⋮</div>
    <div className="w-[110px] h-[27px] bg-[#fbfbf7] border border-[#cfcfcf] flex items-center pl-[8px] gap-[13px] text-[#b8b8b8]">
      <X size={17} strokeWidth={1.25} />
      <Check size={17} strokeWidth={1.25} />
      <span className="text-[13px] italic font-serif text-[#555]">fx</span>
    </div>
    <div className="ml-[3px] flex-1 h-[27px] bg-[#fdfdf9] border border-[#cfcfcf]" />
  </div>
);

const TabBar = () => (
  <div className="h-[29px] bg-[#e8e9e7] border-t border-[#8f9a9e] border-b border-b-[#c6c6c6] flex items-center text-[13.5px] text-[#5a5a5a]">
    <div className="ml-[4px] w-[64px] h-[24px] self-start bg-white border-b-2 border-[#217346] border-x border-x-[#c6c6c6] flex items-center justify-center text-[#217346]">展示表</div>
    <div className="w-[76px] text-center h-[20px] leading-[20px]">数据源表</div>
    <div className="w-[50px] text-center h-[20px] leading-[20px] border-l border-[#a8a8a8]">课程</div>
    <div className="w-[133px] text-center h-[20px] leading-[20px] border-l border-[#a8a8a8] text-[13px]">课程销售额TOP10</div>
    <div className="w-[76px] text-center h-[20px] leading-[20px] border-x border-[#a8a8a8]">价格档位</div>
    <div className="ml-[32px] w-[17px] h-[17px] rounded-full border border-[#888] flex items-center justify-center">
      <Plus size={11} strokeWidth={2.5} className="text-[#777]" />
    </div>
    <span className="ml-[596px] text-[#a8a8a8] font-bold">⋮</span>
    <div className="ml-[13px] flex-1 h-[16px] bg-white border border-[#c4c4c4] flex items-center">
      <div className="w-[15px] h-full border-r border-[#c4c4c4] flex items-center justify-center text-[7px] text-[#444]">◀</div>
    </div>
  </div>
);

const StatusBar = () => (
  <div className="h-[22px] bg-[#eff1ef] flex items-center justify-end">
    <div className="w-[38px] h-full bg-[#d6d7d6] flex items-center justify-center">
      <svg width="14" height="14" viewBox="0 0 14 14"><path d="M.5.5h13v13H.5zM.5 5h13M.5 9.5h13M5 .5v13M9.5.5v13" fill="none" stroke="#666" /></svg>
    </div>
    <div className="w-[41px] flex justify-center">
      <svg width="14" height="16" viewBox="0 0 14 16"><path d="M.5.5h13v15H.5zM3.5 3.5h7v9h-7zM3.5 6h7M3.5 8.500h7M3.500 11h7" fill="none" stroke="#666" /></svg>
    </div>
    <div className="w-[38px] flex justify-center">
      <svg width="14" height="15" viewBox="0 0 14 15"><path d="M.5.5h13v14H.5zM7 .5v7H.5M7 7.500h6.500" fill="none" stroke="#666" /></svg>
    </div>
    <span className="ml-[9px] w-[6px] h-px bg-[#666]" />
    <div className="ml-[5px] w-[71px] h-px bg-[#777] relative">
      <span className="absolute left-[47px] -top-[8px] w-[4px] h-[17px] bg-[#777]" />
    </div>
  </div>
);

const TaskItem = ({ w, icon, text, active, textClass = "" }) => (
  <div className={`h-full shrink-0 flex items-center gap-[3px] border-b-2 border-[#6f97ad] overflow-hidden ${w} ${active ? "bg-[#4c5c64]" : ""}`}>
    {icon}
    <span className={`text-[12.5px] text-[#e6eef0] whitespace-nowrap ${textClass}`}>{text}</span>
  </div>
);

const XlIcon = () => (
  <svg width="22" height="22" viewBox="0 0 22 24" className="shrink-0">
    <rect x="6" y="1" width="15" height="22" rx="1" fill="#21a366" />
    <rect x="6" y="12" width="15" height="5" fill="#107c41" />
    <rect x="0" y="6" width="12" height="12" fill="#185c37" />
    <text x="6" y="15.500" textAnchor="middle" fontSize="9" fill="#fff" fontWeight="bold">X</text>
  </svg>
);

const TaskBar = () => (
  <div className="relative h-[40px] bg-[#1d3640] flex overflow-hidden">
    <TaskItem w="w-[111px]" text="E:\抖音竖版视频" textClass="-ml-[7px]" />
    <TaskItem
      w="w-[153px] ml-[8px] pl-[7px]"
      text="E:\excels视频\Exc..."
      icon={<svg width="14" height="20" viewBox="0 0 16 26" className="mr-[10px] shrink-0"><path d="M2 1h9l3 22-9 2H2z" fill="#eecb62" /><path d="M2 1h4v24H2z" fill="#d9a93e" /></svg>}
    />
    <TaskItem
      w="w-[153px] ml-[8px] pl-[7px]"
      text="Excel最强功能-数..."
      icon={<svg width="22" height="22" viewBox="0 0 22 24" className="mr-[2px] shrink-0"><circle cx="11" cy="12" r="10.500" fill="#7bc23c" /><circle cx="11" cy="12" r="6.500" fill="#cfe89a" /><path d="M6 12h10" stroke="#3a8a20" strokeWidth="2" /></svg>}
    />
    <TaskItem
      w="w-[153px] ml-[8px] pl-[6px]"
      text="MindMaster"
      icon={<svg width="24" height="24" viewBox="0 0 24 24" className="shrink-0"><rect width="24" height="24" rx="4" fill="#1eae8c" /><path d="M5 6l4 6-4 6zM19 6l-4 6 4 6zM9 12h6" fill="none" stroke="#fff" strokeWidth="2.200" /></svg>}
    />
    <TaskItem w="w-[161px] ml-[5px] pl-[12px]" active text="4-11.课程价格分析..." icon={<XlIcon />} />
    <TaskItem w="w-[153px] ml-[2px] pl-[8px]" text="工作簿1 - Excel" icon={<XlIcon />} />
    <TaskItem
      w="w-[151px] ml-[9px] pl-[4px]"
      text="Excel图表实战.ppt..."
      icon={<svg width="24" height="24" viewBox="0 0 26 26" className="shrink-0"><circle cx="15" cy="13" r="11" fill="#e0623f" /><rect x="1" y="7" width="13" height="13" fill="#b93a1e" /><text x="7.500" y="17.500" textAnchor="middle" fontSize="10" fill="#fff" fontWeight="bold">P</text></svg>}
    />
    <div className="ml-auto flex items-center h-full w-[295px] pl-[6px] relative">
      <svg width="16" height="16" viewBox="0 0 16 16" className="shrink-0"><circle cx="8" cy="8" r="8" fill="#5da3d9" /><circle cx="8" cy="8" r="4.500" fill="#e8f2fa" /><path d="M5 10c3 1 5-1 3-2s0-3 3-2" fill="none" stroke="#3a7cb0" strokeWidth="1.500" /></svg>
      <svg width="17" height="13" viewBox="0 0 17 13" className="ml-[8px] shrink-0"><circle cx="6" cy="5.500" r="5.500" fill="#5fc75f" /><circle cx="12" cy="8.500" r="4.500" fill="#9be09b" /></svg>
      <svg width="10" height="20" viewBox="0 0 10 20" className="ml-[10px] shrink-0"><path d="M2 .5h6v6H2zM1 6.500h8v11l-2 2H1z" fill="none" stroke="#dde5e8" /></svg>
      <svg width="10" height="18" viewBox="0 0 10 18" className="ml-[9px] shrink-0"><path d="M9 0v18L3 12H0V6h3z" fill="#b8554a" /></svg>
      <Mic size={18} strokeWidth={1.5} className="ml-[10px] text-[#e8eef0]" />
      <span className="ml-[9px] w-[14px] h-[18px] bg-[#3f5a2a] flex items-center justify-center"><span className="w-[8px] h-[8px] rounded-full bg-[#8fc31f]" /></span>
      <svg width="16" height="16" viewBox="0 0 16 16" className="ml-[9px] shrink-0"><path d="M2 15a13 13 0 0 1 13-13M5 15a10 10 0 0 1 10-10M8 15a7 7 0 0 1 7-7" fill="none" stroke="#c8d2d6" /></svg>
      <svg width="17" height="13" viewBox="0 0 17 13" className="ml-[7px] shrink-0"><circle cx="6" cy="5.500" r="5.500" fill="#5fc75f" /><circle cx="12" cy="8.500" r="4.500" fill="#9be09b" /></svg>
      <Volume2 size={16} strokeWidth={1.25} className="ml-[6px] text-[#dde5e8]" />
      <span className="ml-[7px] text-[14px] text-[#eef3f5]">中</span>
      <span className="ml-[10px] w-[15px] h-[17px] rounded-[3px] bg-[#d8452e] text-white font-bold text-[14px] leading-[17px] text-center">S</span>
      <span className="absolute left-[277px] top-[23px] text-[12.5px] text-[#e6eef0] whitespace-nowrap">2021</span>
    </div>
  </div>
);

const Cursor = () => (
  <svg className="absolute left-[1434px] top-[686px]" width="14" height="20" viewBox="0 0 14 20">
    <path d="M1 1v14l3.500-3 2.500 6 2.500-1-2.500-6h5z" fill="#fff" stroke="#333" strokeWidth=".8" />
  </svg>
);

const App = () => (
  <div className="w-[1728px] h-[1080px] overflow-hidden bg-[#f1f3f1] flex flex-col font-[Lato,'Noto_Sans_CJK_SC',sans-serif]">
    <TitleBar />
    <MenuRow />
    <Ribbon />
    <FormulaBar />
    <ColHead />
    <div className="relative h-[758px] bg-[#bfe4f1] flex overflow-hidden">
      <Slicers />
      <div className="ml-[12px]">
        <Charts />
      </div>
      <div className="absolute left-[1319px] top-[155px] w-[11px] h-[11px] border border-[#217346]" />
      <div className="absolute left-[1263px] top-[544px] w-[48px] h-[22px] bg-white border border-[#555] shadow-[2px_2px_2px_#999] flex items-center justify-center text-[12px] text-[#444]">图表区</div>
      <Cursor />
    </div>
    <div className="relative">
      <TabBar />
      <div className="absolute left-[1437px] -top-[41px] w-[132px] h-[39px] bg-white border border-[#777] shadow-[2px_2px_3px_#888] px-[6px] py-[2px] text-[12.5px] leading-[17px] text-[#595959] whitespace-nowrap">
        1000-2000 (协议金额)
        <br />
        类别: 1000-2000
      </div>
    </div>
    <StatusBar />
    <TaskBar />
  </div>
);

export default App;
